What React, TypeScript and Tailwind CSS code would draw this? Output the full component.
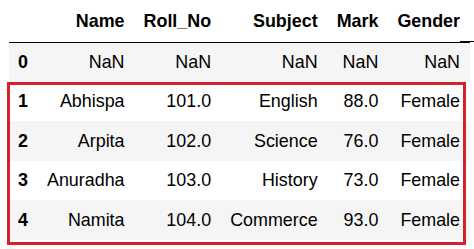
const COLS = ["Name", "Roll_No", "Subject", "Mark", "Gender"];

const ROWS: string[][] = [
  ["0", "NaN", "NaN", "NaN", "NaN", "NaN"],
  ["1", "Abhispa", "101.0", "English", "88.0", "Female"],
  ["2", "Arpita", "102.0", "Science", "76.0", "Female"],
  ["3", "Anuradha", "103.0", "History", "73.0", "Female"],
  ["4", "Namita", "104.0", "Commerce", "93.0", "Female"],
];

export default function App() {
  return (
    <div
      className="relative h-[249px] w-[474px] overflow-hidden bg-white text-[17.9px] text-black"
      style={{ fontFamily: '"Liberation Sans", Arial, sans-serif' }}
    >
      <table className="ml-[9px] border-collapse whitespace-nowrap">
        <thead>
          <tr className="h-[42px] border-b border-black">
            <th className="px-[9.5px]" />
            {COLS.map((c) => (
              <th key={c} className="px-[9.5px] pt-[1px] text-right font-bold">
                {c}
              </th>
            ))}
          </tr>
        </thead>
        <tbody>
          {ROWS.map((r, i) => (
            <tr key={r[0]} className={"h-[39.6px] " + (i % 2 === 0 ? "bg-[#f5f5f5]" : "bg-white")}>
              <th className="pl-[9px] pr-[9.5px] text-left font-bold">{r[0]}</th>
              {r.slice(1).map((v, j) => (
                <td key={j} className="px-[9.5px] text-right">
                  {v}
                </td>
              ))}
            </tr>
          ))}
        </tbody>
      </table>

      {/* header rule runs on past the table edge */}
      <div className="absolute left-[460px] top-[41px] h-px w-[20px] bg-black" />

      {/* highlight box over rows 1-4 */}
      <div className="pointer-events-none absolute left-[7px] top-[82px] h-[163px] w-[459px] border-[3px] border-[#d3222a]" />
    </div>
  );
}
